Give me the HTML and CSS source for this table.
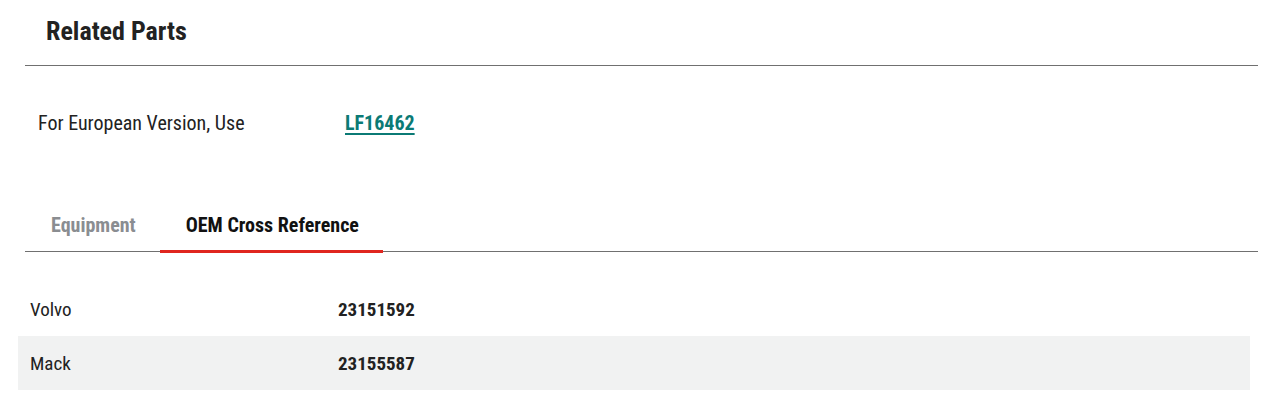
FILE: index.html
```html
<!DOCTYPE html>
<html lang="en">
<head>
<meta charset="utf-8">
<title>Related Parts</title>
<link rel="stylesheet" href="styles.css">
</head>
<body>
<div class="page">
  <section class="related">
    <h2 class="related-title">Related Parts</h2>
    <div class="related-row">
      <span class="related-label">For European Version, Use</span>
      <a class="related-link" href="#">LF16462</a>
    </div>
  </section>
  <div class="tabs">
    <div class="tab">Equipment</div>
    <div class="tab tab-active">OEM Cross Reference</div>
  </div>
  <div class="xref">
    <div class="xref-row">
      <span class="xref-make">Volvo</span>
      <span class="xref-num">23151592</span>
    </div>
    <div class="xref-row xref-row-alt">
      <span class="xref-make">Mack</span>
      <span class="xref-num">23155587</span>
    </div>
  </div>
</div>
</body>
</html>
```
FILE: styles.css
```css
html, body {
  margin: 0;
  padding: 0;
  background: #ffffff;
}
body {
  font-family: "Roboto Condensed", "Roboto", "Liberation Sans", sans-serif;
  font-stretch: condensed;
  color: #222222;
}
.page {
  padding: 0 18px 0 18px;
}
.related {
  margin-left: 7px;
}
.related-title {
  margin: 0;
  height: 66px;
  box-sizing: border-box;
  padding: 15px 0 0 21px;
  font-size: 26px;
  line-height: 32px;
  font-weight: 700;
  color: #222222;
  border-bottom: 1px solid #707070;
}
.related-row {
  display: flex;
  align-items: center;
  padding: 44px 0 0 13px;
  height: 26px;
  font-size: 20px;
  line-height: 26px;
}
.related-label {
  width: 307px;
}
.related-link {
  color: #0b7a75;
  font-weight: 700;
  text-decoration: underline;
  text-underline-offset: 3px;
}
.tabs {
  margin: 65px 0 0 7px;
  display: flex;
  border-bottom: 1px solid #707070;
}
.tab {
  padding: 11px 24px 0 26px;
  height: 50px;
  box-sizing: border-box;
  font-size: 20px;
  line-height: 26px;
  font-weight: 700;
  color: #8a8d91;
  position: relative;
}
.tab-active {
  color: #111111;
}
.tab-active::after {
  content: "";
  position: absolute;
  left: 0;
  right: 0;
  bottom: -2px;
  height: 3px;
  background: #e0261f;
}
.xref {
  margin: 30px 8px 0 0;
}
.xref-row {
  display: flex;
  align-items: center;
  height: 54px;
  padding-left: 12px;
  font-size: 19px;
}
.xref-row-alt {
  background: #f1f2f2;
}
.xref-make {
  width: 308px;
}
.xref-num {
  font-weight: 700;
}
```
